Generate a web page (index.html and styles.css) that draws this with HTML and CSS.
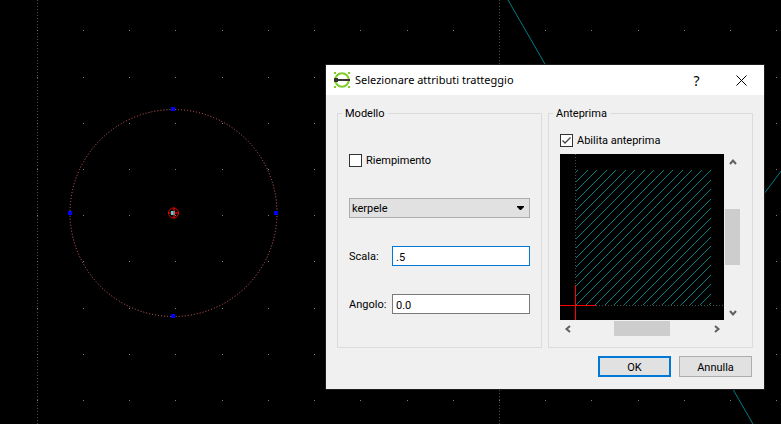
FILE: index.html
```html
<!DOCTYPE html>
<html lang="it">
<head>
  <meta charset="UTF-8" />
  <meta name="viewport" content="width=device-width, initial-scale=1" />
  <title>Selezionare attributi tratteggio</title>
  <link rel="stylesheet" href="styles.css">
</head>
<body>
  <svg class="drawing" aria-hidden="true" shape-rendering="crispEdges">
    <!-- meta grid -->
    <g class="meta-grid">
      <line x1="37.5" y1="0" x2="37.5" y2="100%" />
      <line x1="499.5" y1="0" x2="499.5" y2="100%" />
    </g>
    <g class="grid-points"></g>
    <!-- construction lines -->
    <g class="construction" shape-rendering="auto">
      <line x1="508" y1="0" x2="753" y2="424" />
      <line x1="782" y1="170" x2="742" y2="223" />
    </g>
    <!-- selected circle -->
    <circle class="selected" cx="173.5" cy="213" r="103.5" shape-rendering="auto" />
    <g class="handles">
      <rect x="171" y="107" width="4" height="4" />
      <rect x="68" y="211" width="4" height="4" />
      <rect x="274" y="211" width="4" height="4" />
      <rect x="171" y="314" width="4" height="4" />
    </g>
    <g class="snap" shape-rendering="auto">
      <path class="snap-cross" d="M168 213h11M174 207.500v11" />
      <circle cx="173.500" cy="213" r="5" />
      <rect class="snap-point" x="171" y="211" width="2" height="4" />
      <rect class="snap-center" x="173" y="211" width="2" height="4" />
    </g>
  </svg>

  <form class="dialog" role="dialog" aria-labelledby="dialog-title">
    <header class="title-bar">
      <svg class="app-icon" width="16" height="16" viewBox="0 0 16 16" aria-hidden="true">
        <circle cx="8" cy="8" r="6.800" fill="none" stroke="#80cc28" stroke-width="2" />
        <path d="M0 0h2v2H0zM14 0h2v2h-2zM0 14h2v2H0zM14 14h2v2h-2z" fill="#80cc28" />
        <path d="M0 6h4v1h12v2H4v1H0z" fill="#333" />
      </svg>
      <h1 class="title" id="dialog-title">Selezionare attributi tratteggio</h1>
      <button class="title-btn" type="button" aria-label="Guida">?</button>
      <button class="title-btn" type="button" aria-label="Chiudi">
        <svg width="11" height="11" viewBox="0 0 11 11"><path d="M.5.5l10 10M10.500.5l-10 10" /></svg>
      </button>
    </header>

    <div class="content">
      <fieldset class="group">
        <legend>Modello</legend>
        <div class="pattern-fields">
          <label class="check"><input type="checkbox" /> <span>Riempimento</span></label>
          <select class="pattern" aria-label="Modello">
            <option>kerpele</option>
          </select>
          <div class="field">
            <label for="scale">Scala:</label>
            <input class="text focused" id="scale" type="text" value=".5" />
          </div>
          <div class="field">
            <label for="angle">Angolo:</label>
            <input class="text" id="angle" type="text" value="0.0" />
          </div>
        </div>
      </fieldset>

      <fieldset class="group">
        <legend>Anteprima</legend>
        <div class="preview-fields">
          <label class="check"><input type="checkbox" checked /> <span>Abilita anteprima</span></label>
          <div class="preview">
            <svg class="preview-view" viewBox="0 0 164 166" role="img" aria-label="Anteprima" shape-rendering="crispEdges">
              <rect width="164" height="166" fill="#000" />
              <g class="meta-grid">
                <line x1="15.500" y1="0" x2="15.500" y2="166" />
                <line x1="0" y1="151.500" x2="164" y2="151.500" />
              </g>
              <g class="hatch"></g>
              <path class="origin" d="M15.500 131v35M0 151.500h36" />
            </svg>
            <div class="scroll vertical">
              <button type="button" aria-label="Su"><svg width="8" height="8" viewBox="0 0 8 8"><path d="M1 6l3-3.500L7 6" /></svg></button>
              <div class="thumb"></div>
              <button type="button" aria-label="Giù"><svg width="8" height="8" viewBox="0 0 8 8"><path d="M1 2l3 3.500L7 2" /></svg></button>
            </div>
            <div class="scroll horizontal">
              <button type="button" aria-label="Sinistra"><svg width="8" height="8" viewBox="0 0 8 8"><path d="M6 1L2.500 4L6 7" /></svg></button>
              <div class="thumb"></div>
              <button type="button" aria-label="Destra"><svg width="8" height="8" viewBox="0 0 8 8"><path d="M2 1l3.500 3L2 7" /></svg></button>
            </div>
          </div>
        </div>
      </fieldset>
    </div>

    <footer class="actions">
      <button class="btn default" type="button">OK</button>
      <button class="btn" type="button">Annulla</button>
    </footer>
  </form>

  <script src="drawing.js"></script>
</body>
</html>
```

FILE: styles.css
```css
* {
  box-sizing: border-box;
}

body {
  margin: 0;
  min-height: 100vh;
  background-color: #000;
  color: #000;
  font-family: Roboto, "Open Sans", sans-serif;
  font-size: 11px;
  line-height: 14px;
  overflow: hidden;
}

.drawing {
  position: absolute;
  top: 0;
  left: 0;
  width: 100%;
  height: 100%;
}

.meta-grid line {
  stroke: #484848;
  stroke-dasharray: 1 2;
}

.grid-points {
  fill: #808080;
}

.construction line {
  stroke: #007c80;
}

.selected {
  fill: none;
  stroke: #d86464;
  stroke-dasharray: 1 2;
}

.handles {
  fill: #00f;
}

.snap {
  fill: none;
  stroke: #e00000;
}

.snap .snap-cross {
  stroke: #a00000;
  stroke-width: 2;
}

.snap .snap-point {
  fill: #20e8e8;
  stroke: none;
}

.snap .snap-center {
  fill: #b06868;
  stroke: none;
}

.dialog {
  position: absolute;
  top: 65px;
  left: 326px;
  width: 438px;
  background-color: #f0f0f0;
  outline: 1px solid #1c1c1c;
}

.title-bar {
  display: flex;
  align-items: center;
  height: 30px;
  padding-left: 8px;
  background-color: #fff;
}

.title {
  flex: 1;
  margin: 0 0 0 5px;
  font-family: "Noto Sans", "Open Sans", sans-serif;
  font-size: 11px;
  font-weight: normal;
}

.title-btn {
  display: flex;
  align-items: center;
  justify-content: center;
  width: 45px;
  height: 28px;
  padding: 0;
  border: none;
  background: none;
  color: #000;
  font-family: "Noto Sans", "Open Sans", sans-serif;
  font-size: 14px;
}

.title-btn path {
  fill: none;
  stroke: #000;
}

.content {
  display: grid;
  grid-template-columns: 1fr 1fr;
  gap: 6px;
  padding: 10px 11px 0;
}

.group {
  min-width: 0;
  margin: 0;
  padding: 0 11px;
  border: 1px solid #dcdcdc;
}

.group legend {
  margin-left: -7px;
  padding: 2px 3px 0;
}

.pattern-fields {
  display: flex;
  flex-direction: column;
  gap: 28px;
  padding: 29px 0 33px;
}

.check {
  display: flex;
  align-items: center;
  gap: 4px;
  height: 20px;
}

.check span,
.field label {
  padding-top: 2px;
}

.check input {
  appearance: none;
  width: 13px;
  height: 13px;
  margin: 0;
  border: 1px solid #333;
  background-color: #fff;
}

.check input:checked {
  background-image: url("data:image/svg+xml,%3Csvg xmlns='http://www.w3.org/2000/svg' viewBox='0 0 11 11'%3E%3Cpath d='M1.500 5.500l2.500 2.500L9.500 2.500' fill='none' stroke='%23444' stroke-width='1.300'/%3E%3C/svg%3E");
}

.pattern {
  appearance: none;
  width: 100%;
  height: 20px;
  padding: 2px 2px 0;
  border: 1px solid #adadad;
  border-radius: 0;
  background: #e1e1e1 url("data:image/svg+xml,%3Csvg xmlns='http://www.w3.org/2000/svg' width='7' height='4'%3E%3Cpath d='M0 0h7v1L4 4H3L0 1z'/%3E%3C/svg%3E") no-repeat right 5px center;
  color: #000;
  font: inherit;
}

.field {
  display: flex;
  align-items: center;
}

.field label {
  width: 43px;
}

.text {
  flex: 1;
  min-width: 0;
  height: 20px;
  padding: 2px 3px 0;
  border: 1px solid #7a7a7a;
  background-color: #fff;
  color: #000;
  font: inherit;
}

.text.focused {
  border-color: #0078d7;
}

.preview-fields {
  display: flex;
  flex-direction: column;
  gap: 4px;
  padding: 9px 0;
}

.preview {
  display: grid;
  grid-template-columns: 1fr 15px;
  gap: 1px;
  padding-right: 1px;
}

.preview-view {
  display: block;
  width: 100%;
}

.hatch {
  stroke: #008080;
}

.origin {
  fill: none;
  stroke: #f00;
}

.scroll {
  display: flex;
  align-items: center;
  justify-content: space-between;
}

.scroll.vertical {
  flex-direction: column;
}

.scroll button {
  display: flex;
  align-items: center;
  justify-content: center;
  width: 15px;
  height: 15px;
  padding: 0;
  border: none;
  background: none;
}

.scroll path {
  fill: none;
  stroke: #606060;
  stroke-width: 2;
}

.thumb {
  background-color: #cdcdcd;
}

.vertical .thumb {
  width: 15px;
  height: 34%;
}

.horizontal .thumb {
  width: 34%;
  height: 15px;
}

.actions {
  display: flex;
  justify-content: flex-end;
  gap: 8px;
  padding: 8px 12px 12px;
}

.btn {
  width: 73px;
  height: 21px;
  padding: 2px 0 0;
  border: 1px solid #adadad;
  background-color: #e1e1e1;
  color: #000;
  font: inherit;
}

.btn.default {
  border: 2px solid #0078d7;
}
```

FILE: drawing.js
```js
const SVG_NS = 'http://www.w3.org/2000/svg';

function add(parent, name, attrs) {
  const el = document.createElementNS(SVG_NS, name);
  for (const key in attrs) {
    el.setAttribute(key, attrs[key]);
  }
  parent.appendChild(el);
}

const points = document.querySelector('.grid-points');
const spacing = 46.22;

for (let x = 37.3; x < window.innerWidth; x += spacing) {
  for (let y = 30.8; y < window.innerHeight; y += spacing) {
    add(points, 'rect', { x: Math.floor(x), y: Math.floor(y), width: 1, height: 1 });
  }
}

// 45 degree hatch inside a square, lines clipped to its edges
const hatch = document.querySelector('.hatch');
const left = 15.5;
const bottom = 151.5;
const size = 135;
const step = 9.5;

for (let i = -14; i * step < size; i++) {
  // whole pixels keep every line one pixel thick
  const d = Math.round(i * step);
  const x1 = Math.max(0, d);
  const x2 = Math.min(size, size + d);
  add(hatch, 'line', {
    x1: left + x1,
    y1: bottom - (x1 - d),
    x2: left + x2,
    y2: bottom - (x2 - d)
  });
}
```
